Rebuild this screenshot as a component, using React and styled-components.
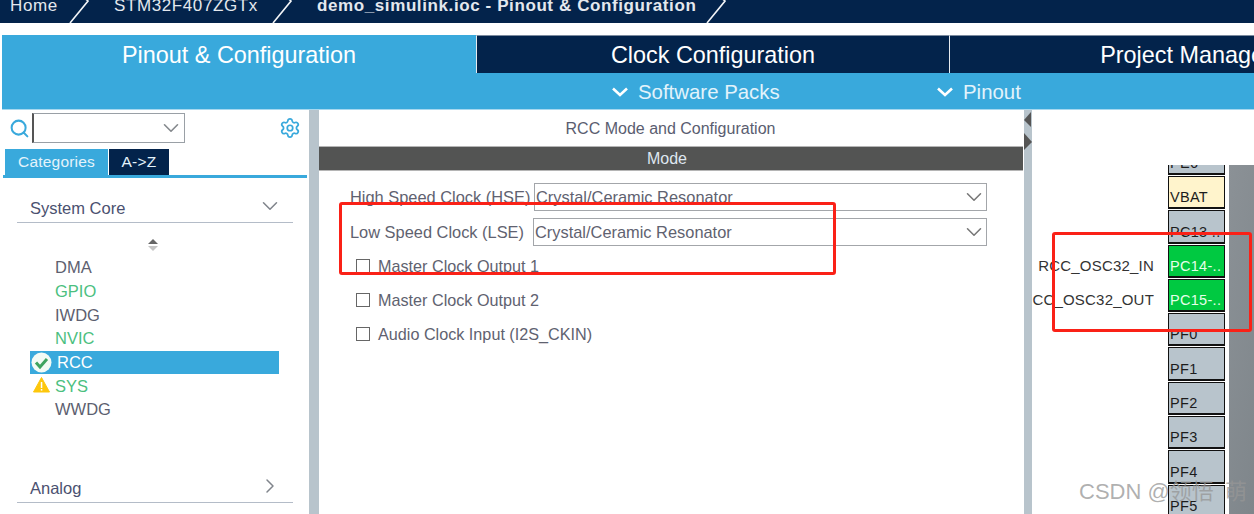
import styled, { createGlobalStyle } from 'styled-components'
import { ChevronDown, ChevronRight, Search, Settings } from 'lucide-react'

const GlobalStyle = createGlobalStyle`
    html, body {
        margin: 0;
        padding: 0;
        background: #fff;
        font-family: "Liberation Sans", Arial, sans-serif;
    }
`
const Page = styled.div`
    position: relative;
    width: 1254px;
    height: 514px;
    overflow: hidden;
    background: #fff;
    display: flex;
    flex-direction: column;
`
const TopBar = styled.div`
    height: 23px;
    flex: none;
    background: #03234b;
    display: flex;
    align-items: flex-end;
    overflow: hidden;
`
const Crumb = styled.div`
    flex: none;
    width: ${props => props.width}px;
    height: 23px;
    padding-left: ${props => props.indent}px;
    box-sizing: border-box;
    display: flex;
    justify-content: space-between;
    align-items: flex-end;
    color: #e4e8ee;
    font-size: 17px;
    letter-spacing: 0.6px;
    font-weight: ${props => props.bold ? 700 : 400};
    white-space: nowrap;
`
const CrumbText = styled.span`
    line-height: 18px;
    margin-bottom: 8px;
`
const Tabs = styled.div`
    margin-top: 12px;
    margin-left: 2px;
    height: 38px;
    flex: none;
    display: flex;
`
const Tab = styled.div`
    flex: none;
    width: ${props => props.width}px;
    box-sizing: border-box;
    display: flex;
    justify-content: center;
    padding-top: 5px;
    font-size: 23.4px;
    line-height: 28px;
    color: #fff;
    white-space: nowrap;
    background: ${props => props.active ? '#39a9dc' : '#03234b'};
    border-left: ${props => props.active ? 'none' : '1px solid #e6eaee'};
    border-top: 1px solid ${props => props.active ? '#39a9dc' : '#7b8a9e'};
`
const SubBar = styled.div`
    margin-left: 2px;
    height: 37px;
    flex: none;
    background: #39a9dc;
    padding: 2px 0 0 610px;
    display: flex;
    align-items: center;
    color: #e2f3fb;
    font-size: 20.4px;
    border-bottom: 1px solid #a7d8ef;
    box-sizing: border-box;
`
const SubItem = styled.div`
    width: ${props => props.width}px;
    display: flex;
    align-items: center;
    gap: 10px;
    white-space: nowrap;
`
const Body = styled.div`
    flex: 1;
    min-height: 0;
    display: flex;
`
const LeftPanel = styled.div`
    flex: none;
    width: 309px;
    box-sizing: border-box;
    padding-left: 3px;
    padding-top: 3px;
`
const SearchRow = styled.div`
    display: flex;
    align-items: center;
    padding-left: 6px;
    height: 30px;
`
const SearchBox = styled.div`
    width: 153px;
    height: 30px;
    margin-left: 2px;
    box-sizing: border-box;
    border: 1px solid #9aa0a6;
    border-left: 2px solid #555;
    display: flex;
    align-items: center;
    justify-content: flex-end;
    color: #85898d;
`
const GearWrap = styled.div`
    margin-left: 94px;
    display: flex;
    color: #39a9dc;
`
const CategoryTabs = styled.div`
    margin-top: 6px;
    margin-left: 2px;
    height: 26px;
    display: flex;
    gap: 1px;
`
const CategoryTab = styled.div`
    width: ${props => props.width}px;
    display: flex;
    align-items: center;
    justify-content: center;
    font-size: 15.5px;
    letter-spacing: 0.2px;
    color: #e4f3fb;
    background: ${props => props.active ? '#39a9dc' : '#03234b'};
`
const BlueRule = styled.div`
    height: 3px;
    width: 304px;
    background: #39a9dc;
`
const Section = styled.div`
    margin: ${props => props.top}px 0 0 14px;
    width: 276px;
    height: 30px;
    box-sizing: border-box;
    padding: 2px 10px 0 13px;
    border-bottom: 1px solid #b4bcc8;
    display: flex;
    align-items: center;
    justify-content: space-between;
    font-size: 16.5px;
    color: #4b5170;
`
const SectionOpen = styled(ChevronDown)`
    margin-bottom: 5px;
    color: #80858c;
`
const SectionClosed = styled(ChevronRight)`
    margin: 0 1px 4px 0;
    color: #80858c;
`
const SortIcon = styled.svg`
    display: block;
    margin: 15px 0 0 144px;
`
const ItemList = styled.div`
    margin: 4px 0 0 27px;
    width: 249px;
`
const Item = styled.div`
    position: relative;
    height: 23.7px;
    padding-left: ${props => props.selected ? 27 : 25}px;
    display: flex;
    align-items: center;
    font-size: 16.5px;
    color: ${props => props.selected ? '#fff' : props.ok ? '#4cbf7f' : '#5d5f70'};
    background: ${props => props.selected ? '#39a9dc' : 'transparent'};
`
const ItemIcon = styled.svg`
    position: absolute;
    left: ${props => props.left}px;
    top: ${props => props.top}px;
`
const Gutter = styled.div`
    flex: none;
    width: ${props => props.width}px;
    background: #b8c4cc;
    display: flex;
    flex-direction: column;
    gap: 4px;
    padding-top: 2px;
    box-sizing: border-box;
`
const CenterPanel = styled.div`
    flex: none;
    width: 705px;
`
const PanelTitle = styled.div`
    height: 36px;
    box-sizing: border-box;
    display: flex;
    align-items: center;
    justify-content: center;
    padding: 2px 2px 0 0;
    font-size: 16px;
    color: #5a5d70;
`
const ModeBar = styled.div`
    height: 25px;
    margin-right: 1px;
    padding-right: 8px;
    background: #535453;
    border-top: 1px solid #b5b5b5;
    border-bottom: 1px solid #b5b5b5;
    display: flex;
    align-items: center;
    justify-content: center;
    font-size: 16px;
    color: #dfe7f0;
    box-sizing: border-box;
`
const FormRow = styled.div`
    display: flex;
    align-items: center;
    height: 28px;
    margin-top: ${props => props.top}px;
    padding-left: 31px;
    font-size: 16.4px;
    color: #5f6270;
    white-space: nowrap;
`
const FormLabel = styled.div`
    width: ${props => props.width}px;
    flex: none;
`
const SelectBox = styled.div`
    width: ${props => props.width}px;
    height: 28px;
    box-sizing: border-box;
    border: 1px solid #a3a6aa;
    padding-left: 1px;
    display: flex;
    align-items: center;
    justify-content: space-between;
`
const SelectChevron = styled(ChevronDown)`
    margin-right: -1px;
    color: #777;
`
const CheckList = styled.div`
    margin-top: 3px;
`
const CheckRow = styled.div`
    display: flex;
    align-items: center;
    height: 34px;
    padding-left: 37px;
    gap: 8px;
    font-size: 16.2px;
    color: #5f6270;
`
const CheckBox = styled.div`
    width: 14px;
    height: 14px;
    box-sizing: border-box;
    border: 1px solid #666;
    background: #fff;
`
const RightPanel = styled.div`
    flex: 1;
    min-width: 0;
    display: flex;
    justify-content: flex-end;
    padding-top: 55px;
    overflow: hidden;
`
const PinColumn = styled.div`
    flex: none;
    display: flex;
    flex-direction: column;
    align-items: flex-end;
`
const PinRow = styled.div`
    display: flex;
    align-items: flex-end;
    margin-bottom: 1px;
`
const PinLabel = styled.div`
    font-size: 15px;
    width: 122px;
    margin: 0 14px 4px 0;
    display: flex;
    justify-content: flex-end;
    overflow: hidden;
    color: #333;
    letter-spacing: 0.2px;
    white-space: nowrap;
`
const Pin = styled.div`
    width: 57px;
    height: ${props => props.height}px;
    box-sizing: border-box;
    border: 1px solid #111;
    border-top: ${props => props.clipped ? 'none' : '1px solid #111'};
    border-bottom-width: 2px;
    background: ${props => props.bg};
    color: ${props => props.color};
    display: flex;
    align-items: flex-end;
    padding: 0 0 2px 1px;
    font-size: 14.5px;
    line-height: 16px;
    letter-spacing: 0.3px;
    overflow: hidden;
    white-space: nowrap;
`
const ChipBody = styled.div`
    flex: none;
    width: 25px;
    margin-left: 4px;
    background: linear-gradient(100deg, #8b9196, #7f868b);
`
const Callout = styled.div`
    position: absolute;
    left: ${props => props.left}px;
    top: ${props => props.top}px;
    width: ${props => props.width}px;
    height: ${props => props.height}px;
    box-sizing: border-box;
    border: 3.5px solid #fa2117;
    border-radius: 3px;
    pointer-events: none;
`
const Watermark = styled.div`
    position: absolute;
    left: 1079px;
    top: 477px;
    font-family: "Liberation Sans", "Noto Sans CJK SC", sans-serif;
    font-size: 22px;
    line-height: 30px;
    color: rgba(150, 150, 150, 0.75);
    white-space: nowrap;
`
const WatermarkTail = styled.span`
    margin-left: 5px;
`

const CrumbArrow = () => (
    <svg width="24" height="23" viewBox="0 0 24 23" fill="none" stroke="#f2f4f7" strokeWidth="1.6">
        <polyline points="14,-4 20,1 2,23" />
    </svg>
)

const SubChevron = () => (
    <svg width="16" height="10" viewBox="0 0 16 10" fill="none" stroke="#fff" strokeWidth="2.6">
        <polyline points="1,1.5 8,8 15,1.5" />
    </svg>
)

const Triangle = ({ left }) => (
    <svg width="8" height="17" viewBox="0 0 8 17" fill="#555">
        <polygon points={left ? '7,0 7,15 0,8' : '0,0 0,17 8,9'} />
    </svg>
)

const pins = [
    { name: 'PE6', height: 10, clipped: true },
    { name: 'VBAT', height: 33.3, bg: '#fff4cc' },
    { name: 'PC13 ..', height: 33.3 },
    { name: 'PC14-..', height: 33.3, bg: '#00c941', color: '#e6ffe9', label: 'RCC_OSC32_IN' },
    { name: 'PC15-..', height: 33.3, bg: '#00c941', color: '#e6ffe9', label: 'RCC_OSC32_OUT' },
    { name: 'PF0', height: 33.3 },
    { name: 'PF1', height: 33.3 },
    { name: 'PF2', height: 33.3 },
    { name: 'PF3', height: 33.3 },
    { name: 'PF4', height: 33.3 },
    { name: 'PF5', height: 33.3 },
]

const items = [
    { name: 'DMA' },
    { name: 'GPIO', ok: true },
    { name: 'IWDG' },
    { name: 'NVIC', ok: true },
    { name: 'RCC', selected: true },
    { name: 'SYS', ok: true, warn: true },
    { name: 'WWDG' },
]

export default function App() {
    return (
        <Page>
            <GlobalStyle />
            <TopBar>
                <Crumb width={92} indent={10}><CrumbText>Home</CrumbText><CrumbArrow /></Crumb>
                <Crumb width={203} indent={22}><CrumbText>STM32F407ZGTx</CrumbText><CrumbArrow /></Crumb>
                <Crumb width={434} indent={22} bold><CrumbText>demo_simulink.ioc - Pinout &amp; Configuration</CrumbText><CrumbArrow /></Crumb>
            </TopBar>
            <Tabs>
                <Tab active width={474}>Pinout &amp; Configuration</Tab>
                <Tab width={473}>Clock Configuration</Tab>
                <Tab width={473}>Project Manager</Tab>
            </Tabs>
            <SubBar>
                <SubItem width={325}><SubChevron />Software Packs</SubItem>
                <SubItem width={120}><SubChevron />Pinout</SubItem>
            </SubBar>
            <Body>
                <LeftPanel>
                    <SearchRow>
                        <Search size={21} color="#39a9dc" strokeWidth={2.3} />
                        <SearchBox><ChevronDown size={26} strokeWidth={1.5} /></SearchBox>
                        <GearWrap><Settings size={22} strokeWidth={1.9} /></GearWrap>
                    </SearchRow>
                    <CategoryTabs>
                        <CategoryTab active width={103}>Categories</CategoryTab>
                        <CategoryTab width={60}>A-&gt;Z</CategoryTab>
                    </CategoryTabs>
                    <BlueRule />
                    <Section top={15}>System Core<SectionOpen size={26} strokeWidth={1.4} /></Section>
                    <SortIcon width="12" height="14" viewBox="0 0 12 14">
                        <polygon points="6,1 11,6 1,6" fill="#666" />
                        <polygon points="6,13 11,8 1,8" fill="#c4c4c4" />
                    </SortIcon>
                    <ItemList>
                        {items.map(item => (
                            <Item key={item.name} selected={item.selected} ok={item.ok}>
                                {item.selected && (
                                    <ItemIcon left={1} top={1} width="21" height="21" viewBox="0 0 21 21">
                                        <circle cx="10.5" cy="10.5" r="10" fill="#f3fbf5" />
                                        <polyline points="5,10.5 9,15 16,7" fill="none" stroke="#3fa45f" strokeWidth="3" />
                                    </ItemIcon>
                                )}
                                {item.warn && (
                                    <ItemIcon left={3} top={3} width="17" height="16" viewBox="0 0 17 16">
                                        <polygon points="8.5,0.5 16.5,15 0.5,15" fill="#fdc70c" stroke="#fdc70c" strokeLinejoin="round" />
                                        <rect x="7.8" y="5" width="1.5" height="6" fill="#fff" />
                                        <rect x="7.8" y="12" width="1.5" height="1.6" fill="#fff" />
                                    </ItemIcon>
                                )}
                                {item.name}
                            </Item>
                        ))}
                    </ItemList>
                    <Section top={51}>Analog<SectionClosed size={24} strokeWidth={1.5} /></Section>
                </LeftPanel>
                <Gutter width={10} />
                <CenterPanel>
                    <PanelTitle>RCC Mode and Configuration</PanelTitle>
                    <ModeBar>Mode</ModeBar>
                    <FormRow top={12}>
                        <FormLabel width={184}>High Speed Clock (HSE)</FormLabel>
                        <SelectBox width={453}>Crystal/Ceramic Resonator<SelectChevron size={26} strokeWidth={1.4} /></SelectBox>
                    </FormRow>
                    <FormRow top={7}>
                        <FormLabel width={183}>Low Speed Clock (LSE)</FormLabel>
                        <SelectBox width={454}>Crystal/Ceramic Resonator<SelectChevron size={26} strokeWidth={1.4} /></SelectBox>
                    </FormRow>
                    <CheckList>
                        <CheckRow><CheckBox />Master Clock Output 1</CheckRow>
                        <CheckRow><CheckBox />Master Clock Output 2</CheckRow>
                        <CheckRow><CheckBox />Audio Clock Input (I2S_CKIN)</CheckRow>
                    </CheckList>
                </CenterPanel>
                <Gutter width={8}>
                    <Triangle left />
                    <Triangle />
                </Gutter>
                <RightPanel>
                    <PinColumn>
                        {pins.map(pin => (
                            <PinRow key={pin.name}>
                                {pin.label && <PinLabel>{pin.label}</PinLabel>}
                                <Pin
                                    height={pin.height}
                                    clipped={pin.clipped}
                                    bg={pin.bg || '#b8c4cc'}
                                    color={pin.color || '#1c1c1c'}
                                >
                                    {pin.name}
                                </Pin>
                            </PinRow>
                        ))}
                    </PinColumn>
                    <ChipBody />
                </RightPanel>
            </Body>
            <Callout left={339} top={202} width={497} height={73} />
            <Callout left={1052} top={232} width={200} height={100} />
            <Watermark>CSDN @领悟<WatermarkTail> 萌</WatermarkTail></Watermark>
        </Page>
    )
}
